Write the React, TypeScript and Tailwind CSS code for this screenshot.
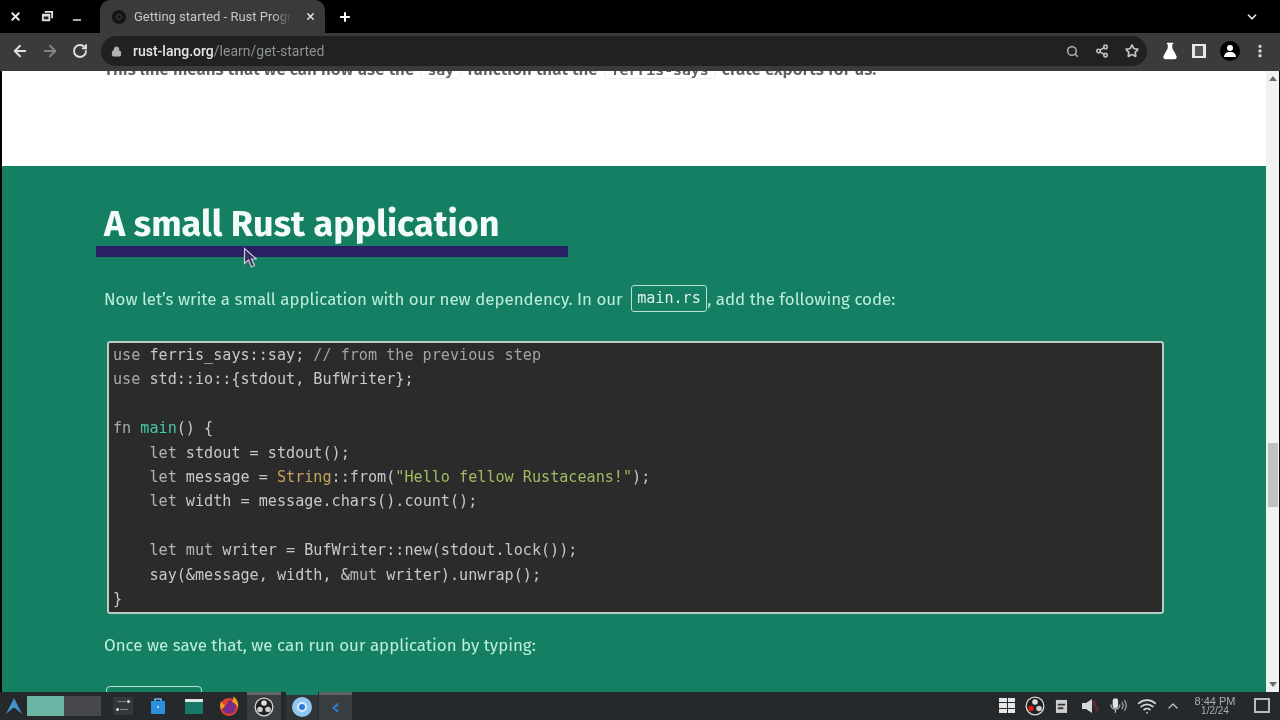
import { ArrowLeft, ArrowRight, ChevronDown, ChevronUp, EllipsisVertical, FlaskConical, Lock, Minus, Plus, RotateCw, Search, Share2, Star, Wifi, X } from "lucide-react";

const sans = "font-['Fira_Sans','Noto_Sans',sans-serif]";
const mono = "font-['DejaVu_Sans_Mono',monospace]";

function TabStrip() {
  return (
    <div className="flex h-[33px] shrink-0 items-center bg-black text-[#e8e8e8]">
      <div className="flex w-[100px] items-center">
        <X className="ml-[9px] h-[13px] w-[13px]" strokeWidth={3.5} />
        <svg viewBox="0 0 14 14" className="ml-[19px] h-[13px] w-[13px]">
          <path d="M4 1h9v8h-2V3H4z" fill="#ddd" />
          <rect x="1" y="4" width="9" height="8" rx="1" fill="#ddd" />
          <rect x="3" y="7" width="5" height="3" fill="#222" />
        </svg>
        <Minus className="ml-[17px] mt-[6px] h-[12px] w-[12px]" strokeWidth={3} />
      </div>
      <div className="flex h-[33px] w-[225px] items-center self-end rounded-t-[10px] bg-[#393a3b]">
        <div className="ml-[12px] flex h-[14px] w-[14px] items-center justify-center rounded-full bg-[#151515]">
          <div className="h-[6px] w-[6px] rounded-full border border-[#444]" />
        </div>
        <span className="ml-[8px] w-[158px] overflow-hidden whitespace-nowrap font-['Roboto',sans-serif] text-[13px] text-[#c4c6c7] [mask-image:linear-gradient(to_right,black_88%,transparent)]">
          Getting started - Rust Programming Language
        </span>
        <X className="ml-[13px] h-[11px] w-[11px] text-[#dcdcdc]" strokeWidth={3.5} />
      </div>
      <Plus className="ml-[13px] h-[14px] w-[14px] text-white" strokeWidth={3.5} />
      <ChevronDown className="ml-auto mr-[21px] h-[14px] w-[14px] text-[#e5e5e5]" strokeWidth={3} />
    </div>
  );
}

function Toolbar() {
  return (
    <div className="flex h-[38px] shrink-0 items-center bg-[#3a3b3c] pb-[2px] text-[#e0e0e0]">
      <ArrowLeft className="ml-[11px] h-[18px] w-[18px]" strokeWidth={2.5} />
      <ArrowRight className="ml-[12px] h-[18px] w-[18px] text-[#838484]" strokeWidth={2.5} />
      <RotateCw className="ml-[13px] h-[16px] w-[16px]" strokeWidth={2.8} />
      <div className="ml-[13px] flex h-[30px] w-[1046px] items-center rounded-full bg-[#1f2122]">
        <Lock className="ml-[10px] h-[11px] w-[11px] text-[#b4b4b4]" fill="#b4b4b4" strokeWidth={2} />
        <span className="ml-[11px] font-['Roboto',sans-serif] text-[14px] font-medium text-[#e6e6e6]">
          rust-lang.org<span className="font-normal text-[#8f9192]">/learn/get-started</span>
        </span>
        <Search className="ml-auto h-[13px] w-[13px] text-[#a5a5a5]" strokeWidth={3} />
        <Share2 className="ml-[16px] h-[14px] w-[14px] text-[#bcbcbc]" strokeWidth={2.8} />
        <Star className="ml-[16px] mr-[8px] h-[14px] w-[14px] text-[#c4c4c4]" strokeWidth={3} />
      </div>
      <FlaskConical className="ml-[14px] h-[18px] w-[18px] text-white" fill="white" strokeWidth={2} />
      <div className="ml-[13px] h-[14px] w-[14px] border-y-[2px] border-x-[3px] border-[#e8e8e8] bg-[#555]" />
      <div className="relative ml-[14px] flex h-[20px] w-[20px] items-center justify-center overflow-hidden rounded-full bg-black">
        <div className="absolute top-[4px] h-[6px] w-[6px] rounded-full bg-white" />
        <div className="absolute top-[11px] h-[5px] w-[12px] rounded-t-full bg-white" />
      </div>
      <EllipsisVertical className="ml-[12px] h-[16px] w-[16px]" strokeWidth={3} />
    </div>
  );
}

function Scrollbar() {
  return (
    <div className="flex w-[14px] shrink-0 flex-col items-center border-r border-black bg-[#f1f1f1] text-[#777]">
      <div className="mt-[5px] h-0 w-0 border-x-[4px] border-b-[5px] border-x-transparent border-b-[#6a6a6a]" />
      <div className="mt-[362px] h-[64px] w-[10px] bg-[#c1c1c1]" />
      <div className="mt-[175px] h-0 w-0 border-x-[4px] border-t-[5px] border-x-transparent border-t-[#6a6a6a]" />
    </div>
  );
}

function InlineCode({ children }: { children: string }) {
  return (
    <span className={`mx-[8px] -mt-[1px] inline-block h-[27px] rounded-[3px] border border-[#b9dfd2] px-[5.5px] text-[15.1px] leading-[25px] text-[#def2ea] ${mono}`}>
      {children}
    </span>
  );
}

function CodeBlock() {
  return (
    <pre className={`ml-[3px] h-[273px] w-[1057px] rounded-[3px] border-2 border-[#b9ccc5] bg-[#2b2b2b] pl-[4px] text-[15.13px] leading-[24.4px] text-[#c8c8c8] ${mono}`}>
      <span className="text-[#a9a9a9]">use</span> ferris_says::say; <span className="text-[#a3a3a3]">// from the previous step</span>
      {"\n"}
      <span className="text-[#a9a9a9]">use</span> std::io::{"{"}stdout, BufWriter{"};"}
      {"\n\n"}
      <span className="text-[#a9a9a9]">fn</span> <span className="text-[#45c7a4]">main</span>() {"{"}
      {"\n    "}
      <span className="text-[#b4b4b4]">let</span> stdout = stdout();
      {"\n    "}
      <span className="text-[#b4b4b4]">let</span> message = <span className="text-[#c7a35c]">String</span>::from(<span className="text-[#a2bb5e]">"Hello fellow Rustaceans!"</span>);
      {"\n    "}
      <span className="text-[#b4b4b4]">let</span> width = message.chars().count();
      {"\n\n    "}
      <span className="text-[#b4b4b4]">let mut</span> writer = BufWriter::new(stdout.lock());
      {"\n    "}
      say(&amp;message, width, &amp;<span className="text-[#b4b4b4]">mut</span> writer).unwrap();
      {"\n"}
      {"}"}
    </pre>
  );
}

function Page() {
  return (
    <div className={`flex min-h-0 flex-1 ${sans}`}>
      <div className="min-w-0 flex-1 overflow-hidden border-l-2 border-black">
        <div className="h-[95px] overflow-hidden bg-white pl-[102px]">
          <p className="-mt-[14px] whitespace-nowrap text-[16.95px] leading-[24px] font-semibold text-[#5f6366]">
            This line means that we can now use the{" "}
            <span className={`mx-[2px] rounded-[3px] border border-[#eeeeee] px-[6px] text-[14.8px] ${mono}`}>say</span> function that the{" "}
            <span className={`mx-[2px] rounded-[3px] border border-[#eeeeee] px-[6px] text-[14.8px] ${mono}`}>ferris-says</span> crate exports for us.
          </p>
        </div>
        <div className="h-[600px] bg-[#147f63] pl-[102px] pt-[36px] text-[#bdeedb]">
          <h2 className="text-[36px] leading-[44px] font-bold whitespace-nowrap text-[#f2fbf7]">A small Rust application</h2>
          <div className="-ml-[8px] h-[11px] w-[472px] bg-[#2a1f63]" />
          <p className="mt-[28px] flex h-[28px] items-center whitespace-pre text-[16.9px] leading-[28px]">
            Now let’s write a small application with our new dependency. In our
            <InlineCode>main.rs</InlineCode>
            <span className="-ml-[8px]">, add the following code:</span>
          </p>
          <div className="mt-[28px]">
            <CodeBlock />
          </div>
          <p className="mt-[17px] h-[28px] text-[16.9px] leading-[28px]">Once we save that, we can run our application by typing:</p>
          <div className="ml-[2px] mt-[27px] h-[40px] w-[96px] rounded-[4px] border border-[#b9dfd2]" />
        </div>
      </div>
      <Scrollbar />
    </div>
  );
}

function ObsIcon({ red }: { red?: boolean }) {
  return (
    <svg viewBox="0 0 20 20" className="h-[20px] w-[20px]">
      <circle cx="10" cy="10" r="9.5" fill="#d8d8d8" />
      <circle cx="10" cy="10" r="8.2" fill="#202020" />
      <circle cx="10" cy="6" r="2.8" fill="#ddd" />
      <circle cx="6" cy="12.5" r="2.8" fill={red ? "#e01818" : "#ccc"} />
      <circle cx="14" cy="12.5" r="2.8" fill="#ccc" />
    </svg>
  );
}

function Taskbar() {
  return (
    <div className="flex h-[28px] shrink-0 items-center bg-[#26292c] pb-[1px] text-[#d8d8d8]">
      <svg viewBox="0 0 20 20" className="ml-[5px] h-[18px] w-[18px]">
        <path d="M10 1 L19 19 L13 14 Q10 10 7 14 L1 19 Z" fill="#3f93c9" />
      </svg>
      <div className="ml-[4px] h-[20px] w-[37px] bg-[#6ab5a4]" />
      <div className="h-[20px] w-[37px] bg-[#46484b]" />
      <div className="ml-[12px] flex h-[18px] w-[20px] flex-col justify-center gap-[5px] bg-[#35383a] px-[3px]">
        <div className="flex items-center justify-end gap-[1px]">
          <div className="h-[1px] w-[8px] bg-[#888]" />
          <div className="h-[3px] w-[3px] rounded-full bg-[#ddd]" />
        </div>
        <div className="flex items-center gap-[1px]">
          <div className="h-[3px] w-[3px] rounded-full bg-[#ddd]" />
          <div className="h-[1px] w-[8px] bg-[#888]" />
        </div>
      </div>
      <svg viewBox="0 0 18 18" className="ml-[16px] h-[18px] w-[18px]">
        <path d="M2 4h14v13H2z" fill="#2b8fdc" />
        <path d="M6 4V2h6v2" fill="none" stroke="#6db8ee" strokeWidth="1.5" />
        <rect x="8" y="9" width="2" height="2" fill="#a8d8f8" />
      </svg>
      <svg viewBox="0 0 20 16" className="ml-[17px] h-[16px] w-[20px]">
        <path d="M1 1h18v3H1z" fill="#dfe8e4" />
        <path d="M1 4h18v12H1z" fill="#17796a" />
      </svg>
      <svg viewBox="0 0 22 22" className="ml-[14px] h-[22px] w-[22px]">
        <circle cx="11" cy="12" r="9" fill="#e0442b" />
        <path d="M11 5a7 7 0 0 1 7 7 7 7 0 0 1-7 7 7 7 0 0 1-7-7c3 1 5-3 7-7z" fill="#7a2b86" />
        <path d="M15 1c4 3 6 7 5 12-1-3-3-5-6-6 1-2 2-4 1-6z" fill="#f6a21c" />
        <path d="M3 6c-1 3-1 6 0 8 2 0 3-2 4-4-2 0-3-2-4-4z" fill="#f6a21c" />
      </svg>
      <div className="-mb-[1px] ml-[7px] flex h-[28px] w-[34px] items-center justify-center border-t-[3px] border-[#62676a] bg-[#3a3d40] pb-[1px]">
        <ObsIcon />
      </div>
      <div className="-mb-[1px] ml-[5px] flex h-[28px] w-[32px] items-center justify-center border-t-[3px] border-[#1b7f70] bg-[#303437] pb-[1px]">
        <div className="flex h-[20px] w-[20px] items-center justify-center rounded-full bg-[#8fc8ee]">
          <div className="h-[10px] w-[10px] rounded-full border-2 border-[#d8eefa] bg-[#3278d8]" />
        </div>
      </div>
      <div className="-mb-[1px] ml-[1px] flex h-[28px] w-[33px] items-center justify-center border-t-[3px] border-[#5d6467] bg-[#393d40] pb-[1px]">
        <svg viewBox="0 0 14 14" className="h-[13px] w-[13px]">
          <path d="M10 1v12L3 7.500z" fill="#2f7fc0" />
          <path d="M10 5 6 7.500 10 10z" fill="#393d40" />
        </svg>
      </div>
      <div className="ml-auto flex items-center">
        <div className="grid h-[15px] w-[16px] grid-cols-2 gap-[1px] bg-[#26292c]">
          <div className="bg-[#e6e6e6]" />
          <div className="bg-[#e6e6e6]" />
          <div className="bg-[#e6e6e6]" />
          <div className="bg-[#e6e6e6]" />
          <div className="bg-[#e6e6e6]" />
          <div className="bg-[#e6e6e6]" />
        </div>
        <div className="ml-[10px]">
          <ObsIcon red />
        </div>
        <svg viewBox="0 0 14 16" className="ml-[10px] h-[15px] w-[13px]">
          <path d="M1 2h12v14H1z" fill="#cfcfcf" />
          <path d="M3 6h8v2H3zM3 10h6v2H3z" fill="#33363a" />
        </svg>
        <svg viewBox="0 0 18 16" className="ml-[13px] h-[18px] w-[18px]">
          <path d="M1 5h4l6-4v14l-6-4H1z" fill="#d8d8d8" />
          <path d="M12 3l5 10" stroke="#5c2a30" strokeWidth="3" />
        </svg>
        <svg viewBox="0 0 20 18" className="ml-[11px] h-[17px] w-[18px]">
          <rect x="3" y="1" width="6" height="11" rx="3" fill="#e0e0e0" />
          <path d="M1 8a5 5 0 0 0 10 0M6 13v4" fill="none" stroke="#bbb" strokeWidth="1.4" />
          <path d="M13 5q3 4 0 8M16 3q4 6 0 12" fill="none" stroke="#999" strokeWidth="1.5" />
        </svg>
        <Wifi className="ml-[9px] h-[20px] w-[20px] text-[#d8d8d8]" strokeWidth={2} />
        <ChevronUp className="ml-[8px] h-[16px] w-[16px] text-[#c0c0c0]" strokeWidth={2} />
        <div className="ml-[12px] flex w-[44px] flex-col items-center font-['Liberation_Sans',sans-serif] text-[11px] leading-[10px] text-[#a9adaf]">
          <span>8:44 PM</span>
          <span className="text-[10px]">1/2/24</span>
        </div>
        <div className="ml-[17px] mr-[10px] h-[15px] w-[16px] border-2 border-[#b9bcbe]" />
      </div>
    </div>
  );
}

export default function App() {
  return (
    <div className="relative flex h-[720px] w-[1280px] flex-col overflow-hidden bg-black blur-[0.5px]">
      <TabStrip />
      <Toolbar />
      <Page />
      <Taskbar />
      <svg viewBox="0 0 14 22" className="absolute left-[243px] top-[247px] h-[22px] w-[14px]">
        <path d="M1.500 1.500v15l4-3.500 3 7 3-1.500-3-6.500h5z" fill="#34305f" stroke="#d6c8dc" strokeWidth="1.200" />
      </svg>
    </div>
  );
}
